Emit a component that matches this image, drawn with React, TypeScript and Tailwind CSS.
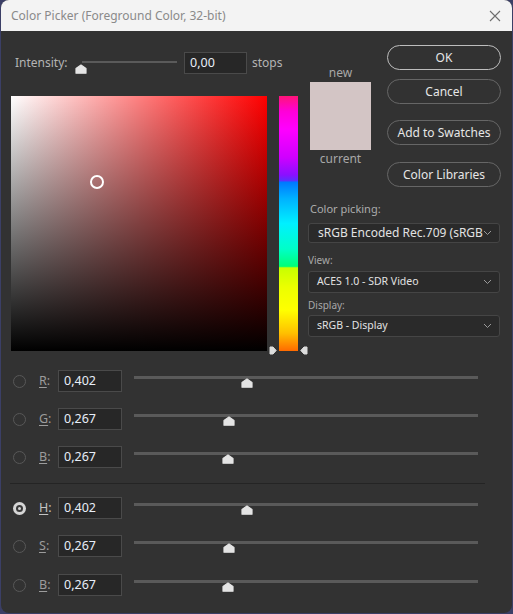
import React from "react";

const Thumb = () => (
  <svg width="12" height="10" viewBox="0 0 12 10" className="block">
    <path d="M6 1 L11 4.6 V9.2 H1 V4.6 Z" fill="#e4e4e4" stroke="#e4e4e4" strokeWidth="1.2" strokeLinejoin="round" />
  </svg>
);

const SideTri = ({ dir }: { dir: "right" | "left" }) => (
  <svg width="8" height="9" viewBox="0 0 8 9" className="block">
    {dir === "right" ? (
      <path d="M1 1 H4 L7.2 4.5 L4 8 H1 Z" fill="#dcdcdc" stroke="#dcdcdc" strokeWidth="1" strokeLinejoin="round" />
    ) : (
      <path d="M7 1 H4 L0.8 4.5 L4 8 H7 Z" fill="#dcdcdc" stroke="#dcdcdc" strokeWidth="1" strokeLinejoin="round" />
    )}
  </svg>
);

const Chevron = () => (
  <svg width="9" height="6" viewBox="0 0 9 6" className="block">
    <path d="M1 1 L4.5 4.5 L8 1" fill="none" stroke="#9a9a9a" strokeWidth="1" />
  </svg>
);

function Radio({ checked }: { checked?: boolean }) {
  if (checked) {
    return (
      <div className="w-[13px] h-[13px] rounded-full bg-[#d6d6d6] flex items-center justify-center">
        <div className="w-[7px] h-[7px] rounded-full bg-[#3a3a3a] flex items-center justify-center">
          <div className="w-[3px] h-[3px] rounded-full bg-[#d6d6d6]" />
        </div>
      </div>
    );
  }
  return <div className="w-[13px] h-[13px] rounded-full border-[1.5px] border-[#585858]" />;
}

type RowProps = { label: string; value: string; pos: number; checked?: boolean };

function Row({ label, value, pos, checked }: RowProps) {
  return (
    <div className="flex items-start h-[22px]">
      <div className="ml-[12px] h-[22px] flex items-center">
        <Radio checked={checked} />
      </div>
      <div
        className={`ml-[13px] w-[19px] h-[22px] flex items-center text-[12.5px] ${
          checked ? "text-[#c4c4c4]" : "text-[#9c9c9c]"
        }`}
      >
        <span className="underline underline-offset-[2px] decoration-[1px]">{label}</span>
        <span>:</span>
      </div>
      <div className="w-[64px] h-[22px] border border-[#4a4a4a] bg-[#272727] flex items-center pl-[5px] text-[12.5px] text-[#e8eef8]">
        {value}
      </div>
      <div className="ml-[12px] w-[344px] flex flex-col">
        <div className="mt-[6px] h-[3px] bg-[#5a5a5a]" />
        <div className="mt-[-1px]" style={{ marginLeft: pos - 133 - 6 }}>
          <Thumb />
        </div>
      </div>
    </div>
  );
}

function Button({ children, primary }: { children: React.ReactNode; primary?: boolean }) {
  return (
    <div
      className={`h-[25px] w-[114px] rounded-full flex items-center justify-center text-[12px] text-[#e6e6e6] ${
        primary ? "border-[1.5px] border-[#bdbdbd]" : "border-[1.5px] border-[#666666]"
      }`}
    >
      {children}
    </div>
  );
}

function Select({ text, big, h }: { text: string; big?: boolean; h: string }) {
  return (
    <div
      className={`${h} w-[192px] rounded-[3px] border border-[#454545] bg-[#2a2a2a] flex items-center overflow-hidden`}
    >
      <div
        className={`flex-1 whitespace-nowrap ${
          big ? "pl-[9px] text-[12px] text-[#e2e2e2]" : "pl-[8px] text-[10.5px] text-[#e2e2e2]"
        }`}
      >
        {text}
      </div>
      <div className="w-[16px] flex items-center justify-start pr-[4px]">
        <Chevron />
      </div>
    </div>
  );
}

const hueGradient =
  "linear-gradient(to bottom, #ff1478 0%, #ff00d8 6%, #ff00ff 13%, #d000ff 24%, #8a10ff 31%, #5a30ff 33.2%, #0078ff 33.8%, #00b0ff 40%, #00f0ff 50%, #00ffc8 60%, #00ff78 66.8%, #c8ff00 67.4%, #ecff00 75%, #ffff00 84%, #ffc000 93%, #ff6a00 100%)";

export default function App() {
  return (
    <div className="w-[513px] h-[614px] bg-[#3b3f66] font-['Noto_Sans',sans-serif] overflow-hidden">
      <div className="ml-[1px] w-[511px] h-[613px] rounded-[8px] overflow-hidden bg-[#323232] flex flex-col">
        {/* Title bar */}
        <div className="h-[31px] bg-[#f3f3f3] flex items-center justify-between pl-[10px] pr-[10px] shrink-0">
          <span className="text-[12px] text-[#8a8a8a]">Color Picker (Foreground Color, 32-bit)</span>
          <svg width="12" height="12" viewBox="0 0 12 12" className="mr-[1px]">
            <path d="M1 1 L11 11 M11 1 L1 11" stroke="#6e6e6e" strokeWidth="1.1" />
          </svg>
        </div>

        {/* Top section */}
        <div className="flex">
          {/* Left column */}
          <div className="pl-[10px] w-[307px] flex flex-col">
            <div className="mt-[21px] h-[22px] flex items-center">
              <span className="ml-[4px] w-[67px] text-[12px] text-[#b4b4b4]">Intensity:</span>
              <div className="w-[95px] h-[22px] flex flex-col">
                <div className="mt-[9px] h-[3px] bg-[#5a5a5a]" />
                <div className="mt-[1px] ml-[-7px]">
                  <Thumb />
                </div>
              </div>
              <div className="ml-[7px] w-[63px] h-[22px] border border-[#4a4a4a] bg-[#272727] flex items-center pl-[5px] text-[12.5px] text-[#e8eef8]">
                0,00
              </div>
              <span className="ml-[5px] text-[12px] text-[#b4b4b4]">stops</span>
            </div>
            <div className="mt-[22px] flex">
              <div
                className="w-[256px] h-[255px] relative"
                style={{
                  background:
                    "linear-gradient(to top, #000 0%, rgba(0,0,0,0) 100%), linear-gradient(to right, #fff 0%, #f00 100%)",
                }}
              >
                <div className="absolute left-[79px] top-[79px] w-[14px] h-[14px] rounded-full border-[2px] border-white" />
              </div>
              <div className="ml-[12px] w-[19px] h-[255px] relative" style={{ background: hueGradient }}>
                <div className="absolute left-[-10px] bottom-[-4px]">
                  <SideTri dir="right" />
                </div>
                <div className="absolute right-[-10px] bottom-[-4px]">
                  <SideTri dir="left" />
                </div>
              </div>
            </div>
          </div>

          {/* Right column */}
          <div className="w-[193px] flex flex-col">
            <div className="flex">
              <div className="ml-[2px] w-[61px] pt-[35px] flex flex-col items-center">
                <div className="leading-[14px] text-[12px] text-[#a8a8a8]">new</div>
                <div className="mt-[2px] w-[61px] h-[68px] bg-[#d3c5c5]" />
                <div className="mt-[2px] leading-[14px] text-[12px] text-[#a8a8a8]">current</div>
              </div>
              <div className="ml-[16px] pt-[14px] flex flex-col">
                <Button primary>OK</Button>
                <div className="mt-[9px]">
                  <Button>Cancel</Button>
                </div>
                <div className="mt-[16px]">
                  <Button>Add to Swatches</Button>
                </div>
                <div className="mt-[17px]">
                  <Button>Color Libraries</Button>
                </div>
              </div>
            </div>
            <div className="mt-[15px] pl-[2px] leading-[14px] text-[11px] text-[#acacac]">Color picking:</div>
            <div className="mt-[7px]">
              <Select text="sRGB Encoded Rec.709 (sRGB" big h="h-[20px]" />
            </div>
            <div className="mt-[11px] leading-[13px] text-[10px] text-[#a8a8a8]">View:</div>
            <div className="mt-[4px]">
              <Select text="ACES 1.0 - SDR Video" h="h-[22px]" />
            </div>
            <div className="mt-[6px] leading-[13px] text-[10px] text-[#a8a8a8]">Display:</div>
            <div className="mt-[3px]">
              <Select text="sRGB - Display" h="h-[22px]" />
            </div>
          </div>
        </div>

        {/* Sliders */}
        <div className="mt-[19px] flex flex-col">
          <Row label="R" value="0,402" pos={246} />
          <div className="mt-[16px]">
            <Row label="G" value="0,267" pos={228} />
          </div>
          <div className="mt-[16px]">
            <Row label="B" value="0,267" pos={227} />
          </div>
          <div className="mt-[15px] ml-[9px] w-[475px] h-[1px] bg-[#242424]" />
          <div className="mt-[13px]">
            <Row label="H" value="0,402" pos={246} checked />
          </div>
          <div className="mt-[16px]">
            <Row label="S" value="0,267" pos={228} />
          </div>
          <div className="mt-[17px]">
            <Row label="B" value="0,267" pos={227} />
          </div>
        </div>
      </div>
    </div>
  );
}
